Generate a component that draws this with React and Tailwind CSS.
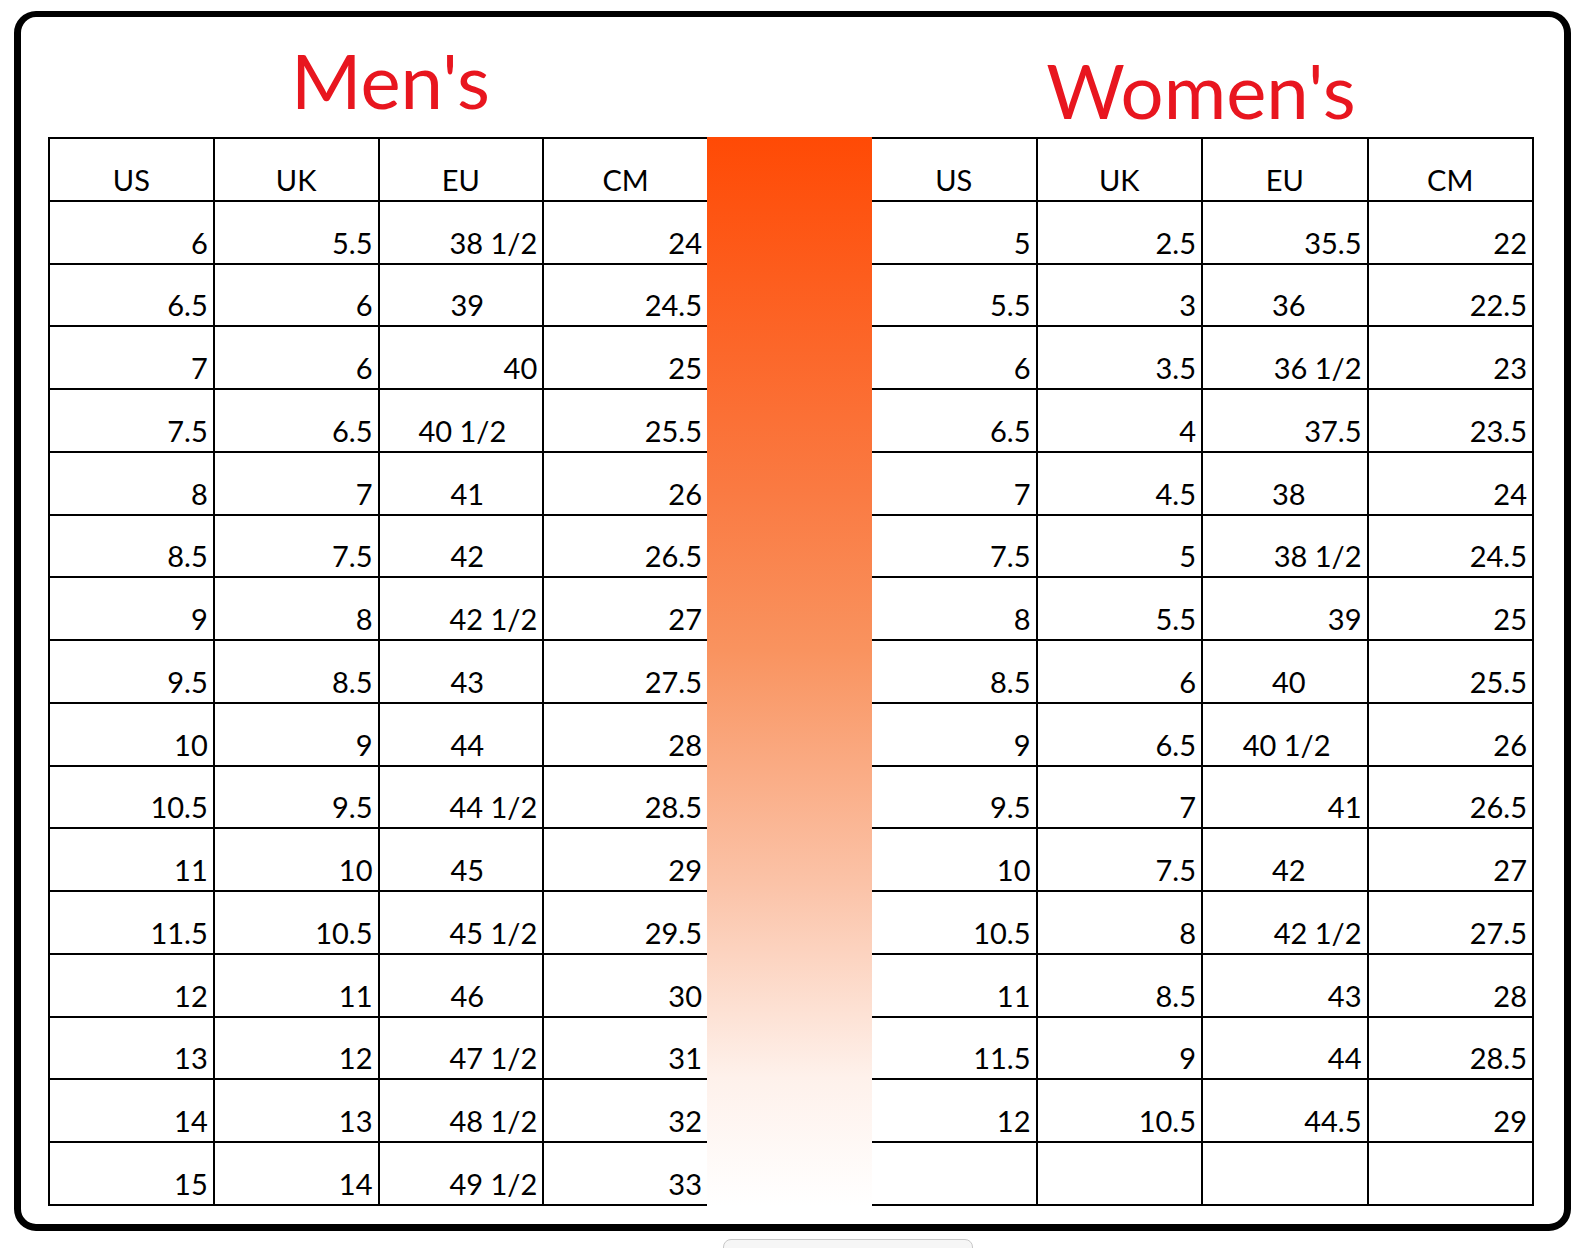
import React from "react";

const men = [
  ["6", "5.5", "38 1/2", "24"],
  ["6.5", "6", "39", "24.5"],
  ["7", "6", "40", "25"],
  ["7.5", "6.5", "40 1/2", "25.5"],
  ["8", "7", "41", "26"],
  ["8.5", "7.5", "42", "26.5"],
  ["9", "8", "42 1/2", "27"],
  ["9.5", "8.5", "43", "27.5"],
  ["10", "9", "44", "28"],
  ["10.5", "9.5", "44 1/2", "28.5"],
  ["11", "10", "45", "29"],
  ["11.5", "10.5", "45 1/2", "29.5"],
  ["12", "11", "46", "30"],
  ["13", "12", "47 1/2", "31"],
  ["14", "13", "48 1/2", "32"],
  ["15", "14", "49 1/2", "33"],
];
const menLeft = [1, 4, 5, 7, 8, 10, 12];
const menShift = [3];

const women = [
  ["5", "2.5", "35.5", "22"],
  ["5.5", "3", "36", "22.5"],
  ["6", "3.5", "36 1/2", "23"],
  ["6.5", "4", "37.5", "23.5"],
  ["7", "4.5", "38", "24"],
  ["7.5", "5", "38 1/2", "24.5"],
  ["8", "5.5", "39", "25"],
  ["8.5", "6", "40", "25.5"],
  ["9", "6.5", "40 1/2", "26"],
  ["9.5", "7", "41", "26.5"],
  ["10", "7.5", "42", "27"],
  ["10.5", "8", "42 1/2", "27.5"],
  ["11", "8.5", "43", "28"],
  ["11.5", "9", "44", "28.5"],
  ["12", "10.5", "44.5", "29"],
  ["", "", "", ""],
];
const womenLeft = [1, 4, 7, 10];
const womenShift = [8];

const heads = ["US", "UK", "EU", "CM"];

function Table({ rows, leftRows, shiftRows, side }) {
  const outer =
    side === "men"
      ? "grid grid-cols-4 grid-rows-[repeat(17,minmax(0,1fr))] gap-[2px] bg-black pl-[2px] pt-[2px] pb-[2px] w-[659px] h-[1069px]"
      : "grid grid-cols-4 grid-rows-[repeat(17,minmax(0,1fr))] gap-[2px] bg-black pr-[2px] pt-[2px] pb-[2px] w-[662px] h-[1069px]";
  const leftPad = side === "men" ? "pl-[71px]" : "pl-[69px]";
  return (
    <div className={outer}>
      {heads.map((h) => (
        <div key={h} className="bg-white flex items-end justify-center pb-[6px] leading-none">
          {h}
        </div>
      ))}
      {rows.map((r, i) =>
        r.map((v, j) => {
          const left = j === 2 && leftRows.includes(i);
          const shift = j === 2 && shiftRows.includes(i);
          let cls = "bg-white flex items-end justify-end pb-[6px] pr-[5px] leading-none";
          if (left) cls = "bg-white flex items-end justify-start pb-[6px] leading-none " + leftPad;
          if (shift) cls = "bg-white flex items-end justify-end pb-[6px] pr-[36px] leading-none";
          return (
            <div key={i + "-" + j} className={cls}>
              {v}
            </div>
          );
        })
      )}
    </div>
  );
}

export default function App() {
  return (
    <div className="w-[1588px] h-[1248px] bg-white overflow-hidden font-[Lato,sans-serif] text-black">
      <div className="ml-[14px] mt-[11px] w-[1557px] h-[1220px] border-t-[6px] border-b-[7px] border-l-[7px] border-r-[7px] border-black rounded-[22px] pl-[27px]">
        <div className="flex h-[120px] text-[#e8161f] text-[76px] leading-none">
          <div className="w-[659px] pl-[243px] mt-[25px]">Men's</div>
          <div className="w-[165px]" />
          <div className="w-[662px] text-center mt-[35px] pr-[4px]">Women's</div>
        </div>
        <div className="flex text-[29px]">
          <Table rows={men} leftRows={menLeft} shiftRows={menShift} side="men" />
          <div className="w-[165px] h-[1069px] bg-[linear-gradient(to_bottom,#ff4a05_0%,#fa7a42_33%,#f9935f_48%,#fbc3a8_70%,#fef1eb_88%,#ffffff_100%)]" />
          <Table rows={women} leftRows={womenLeft} shiftRows={womenShift} side="women" />
        </div>
      </div>
      <div className="ml-[723px] mt-[8px] w-[250px] h-[30px] rounded-[8px] border border-[#c8c8c8] bg-[#f6f6f6]" />
    </div>
  );
}
